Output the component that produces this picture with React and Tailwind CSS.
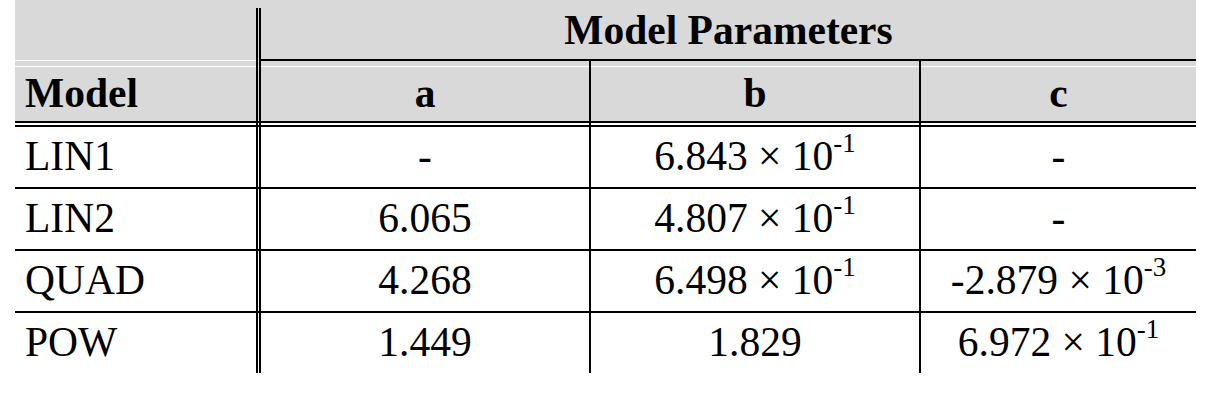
import React from "react";

const VL = ({ className = "" }) => <div className={`w-[2px] shrink-0 bg-black ${className}`} />;

function Sci({ m, e }) {
  return (
    <span>
      {m} × 10<sup className="text-[65%] -top-[0.67em]">{e}</sup>
    </span>
  );
}

const rows = [
  ["LIN1", "-", <Sci m="6.843" e="-1" />, "-"],
  ["LIN2", "6.065", <Sci m="4.807" e="-1" />, "-"],
  ["QUAD", "4.268", <Sci m="6.498" e="-1" />, <Sci m="-2.879" e="-3" />],
  ["POW", "1.449", "1.829", <Sci m="6.972" e="-1" />],
];

export default function App() {
  return (
    <div className="w-[1225px] h-[411px] bg-white [font-family:Liberation_Serif,serif] text-black text-[41.5px] leading-none">
      <div className="ml-[15px] w-[1181px] flex flex-col">
        {/* header row 1 */}
        <div className="flex h-[61px] bg-[#d9d9d9]">
          <div className="w-[241px] h-[61px] border-b border-white" />
          <VL className="mt-[8px] h-[53px]" />
          <div className="w-px" />
          <VL className="mt-[8px] h-[53px]" />
          <div className="w-[935px] h-[61px] border-b-2 border-black flex items-center justify-center font-bold pt-[2px]">
            Model Parameters
          </div>
        </div>
        {/* header row 2 */}
        <div className="flex h-[60px] bg-[#d9d9d9]">
          <div className="w-[241px] flex flex-col">
            <div className="mt-[5px] h-px bg-white" />
            <div className="flex-1 flex items-center pl-[10px] font-bold">Model</div>
          </div>
          <VL />
          <div className="w-px flex flex-col"><div className="mt-[5px] h-px bg-white" /></div>
          <VL />
          {["a", "b", "c"].map((t, i) => (
            <React.Fragment key={t}>
              <div className={`${i === 2 ? "w-[275px]" : "w-[328px]"} flex flex-col`}>
                <div className="mt-[5px] h-px bg-white" />
                <div className="flex-1 flex items-center justify-center font-bold">{t}</div>
              </div>
              {i < 2 && <VL />}
            </React.Fragment>
          ))}
        </div>
        {/* double separator */}
        <div className="flex h-[6px]">
          <div className="w-[241px] border-y-2 border-black" />
          <VL />
          <div className="w-px border-y-2 border-black" />
          <VL />
          <div className="w-[328px] border-y-2 border-black" />
          <VL />
          <div className="w-[328px] border-y-2 border-black" />
          <VL />
          <div className="w-[275px] border-y-2 border-black" />
        </div>
        {/* body */}
        {rows.map((r, ri) => {
          const last = ri === rows.length - 1;
          const b = last ? "h-[60px]" : "h-[62px] border-b-2 border-black";
          return (
            <div key={ri} className="flex">
              <div className={`w-[241px] ${b} flex items-center pl-[10px]`}>{r[0]}</div>
              <VL className={last ? "h-[60px]" : "h-[62px]"} />
              <div className={`w-px ${b}`} />
              <VL className={last ? "h-[60px]" : "h-[62px]"} />
              <div className={`w-[328px] ${b} flex items-center justify-center`}>{r[1]}</div>
              <VL className={last ? "h-[60px]" : "h-[62px]"} />
              <div className={`w-[328px] ${b} flex items-center justify-center`}>{r[2]}</div>
              <VL className={last ? "h-[60px]" : "h-[62px]"} />
              <div className={`w-[275px] ${b} flex items-center justify-center`}>{r[3]}</div>
            </div>
          );
        })}
      </div>
    </div>
  );
}
